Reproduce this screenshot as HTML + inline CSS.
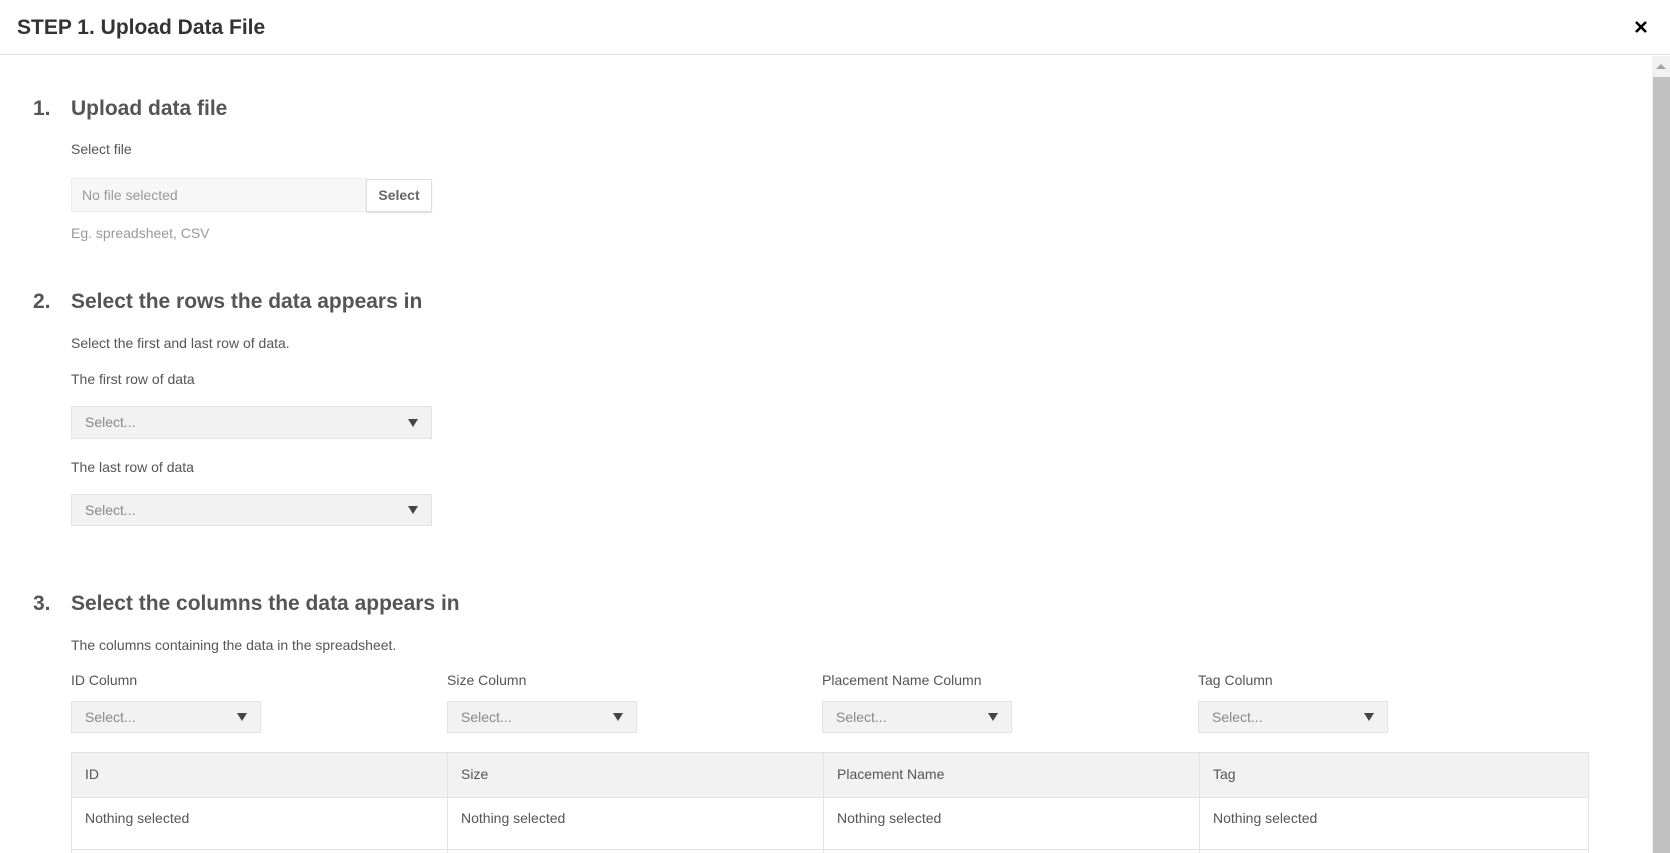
<!DOCTYPE html>
<html style="height:853px;overflow:hidden"><head><meta charset="utf-8"><style>
*{box-sizing:border-box;margin:0;padding:0}
body{width:1670px;height:853px;overflow:hidden;background:#fff;font-family:"Liberation Sans",sans-serif;color:#555;position:relative}
.a{position:absolute;white-space:nowrap}
.hdr{position:absolute;left:0;top:0;width:1670px;height:55px;border-bottom:1px solid #e3e3e3}
.title{left:17px;top:16px;font-size:21px;font-weight:bold;color:#333}
.h{font-size:21px;font-weight:bold;color:#555}
.t{font-size:14px;color:#555}
.g{font-size:14px;color:#999}
.sel{position:absolute;background:#f2f2f2;border:1px solid #e3e3e3;font-size:14px;color:#888;padding-left:13px}
.sel:after{content:"";position:absolute;right:13px;top:50%;margin-top:-4px;border-left:5px solid transparent;border-right:5px solid transparent;border-top:8px solid #444}
table{position:absolute;left:71px;top:752px;width:1518px;border-collapse:collapse;font-size:14px;color:#555}
td{border:1px solid #e3e3e3;padding-left:13px;vertical-align:top}
tr.last td{border-bottom:none}
</style></head><body>
<div class="hdr"></div>
<div class="a title">STEP 1. Upload Data File</div>
<svg class="a" style="left:1634px;top:20px" width="14" height="14" viewBox="0 0 14 14"><path d="M2 2L12 12M12 2L2 12" stroke="#000" stroke-width="2.6"/></svg>
<div class="a" style="left:1652px;top:56px;width:18px;height:797px;background:#f1f1f1"></div>
<div class="a" style="left:1653px;top:77px;width:17px;height:776px;background:#c1c1c1"></div>
<div class="a" style="left:1656px;top:64px;border-left:5px solid transparent;border-right:5px solid transparent;border-bottom:5px solid #a3a3a3"></div>

<div class="a h" style="left:33px;top:97px">1.</div><div class="a h" style="left:71px;top:97px">Upload data file</div>
<div class="a t" style="left:71px;top:141px">Select file</div>
<div class="a" style="left:71px;top:178px;width:296px;height:34px;background:#f7f7f7;border:1px solid #ececec;font-size:14px;color:#999;padding:8px 10px">No file selected</div>
<div class="a" style="left:366px;top:179px;width:66px;height:33px;background:#fff;border:1px solid #ddd;box-shadow:0 1px 1px rgba(0,0,0,.15);font-size:14px;font-weight:bold;color:#666;text-align:center;line-height:31px">Select</div>
<div class="a g" style="left:71px;top:225px">Eg. spreadsheet, CSV</div>

<div class="a h" style="left:33px;top:290px">2.</div><div class="a h" style="left:71px;top:290px">Select the rows the data appears in</div>
<div class="a t" style="left:71px;top:335px">Select the first and last row of data.</div>
<div class="a t" style="left:71px;top:371px">The first row of data</div>
<div class="sel" style="left:71px;top:406px;width:361px;height:33px;line-height:31px">Select...</div>
<div class="a t" style="left:71px;top:459px">The last row of data</div>
<div class="sel" style="left:71px;top:494px;width:361px;height:32px;line-height:30px">Select...</div>

<div class="a h" style="left:33px;top:592px">3.</div><div class="a h" style="left:71px;top:592px">Select the columns the data appears in</div>
<div class="a t" style="left:71px;top:637px">The columns containing the data in the spreadsheet.</div>
<div class="a t" style="left:71px;top:672px">ID Column</div>
<div class="a t" style="left:447px;top:672px">Size Column</div>
<div class="a t" style="left:822px;top:672px">Placement Name Column</div>
<div class="a t" style="left:1198px;top:672px">Tag Column</div>
<div class="sel" style="left:71px;top:701px;width:190px;height:32px;line-height:30px">Select...</div>
<div class="sel" style="left:447px;top:701px;width:190px;height:32px;line-height:30px">Select...</div>
<div class="sel" style="left:822px;top:701px;width:190px;height:32px;line-height:30px">Select...</div>
<div class="sel" style="left:1198px;top:701px;width:190px;height:32px;line-height:30px">Select...</div>
<table>
<tr style="background:#f2f2f2;height:45px"><td style="width:376px;line-height:43px">ID</td><td style="width:376px;line-height:43px">Size</td><td style="width:376px;line-height:43px">Placement Name</td><td style="line-height:43px">Tag</td></tr>
<tr style="height:52px"><td style="padding-top:12px">Nothing selected</td><td style="padding-top:12px">Nothing selected</td><td style="padding-top:12px">Nothing selected</td><td style="padding-top:12px">Nothing selected</td></tr>
<tr class="last" style="height:4px"><td></td><td></td><td></td><td></td></tr>
</table>
</body></html>
